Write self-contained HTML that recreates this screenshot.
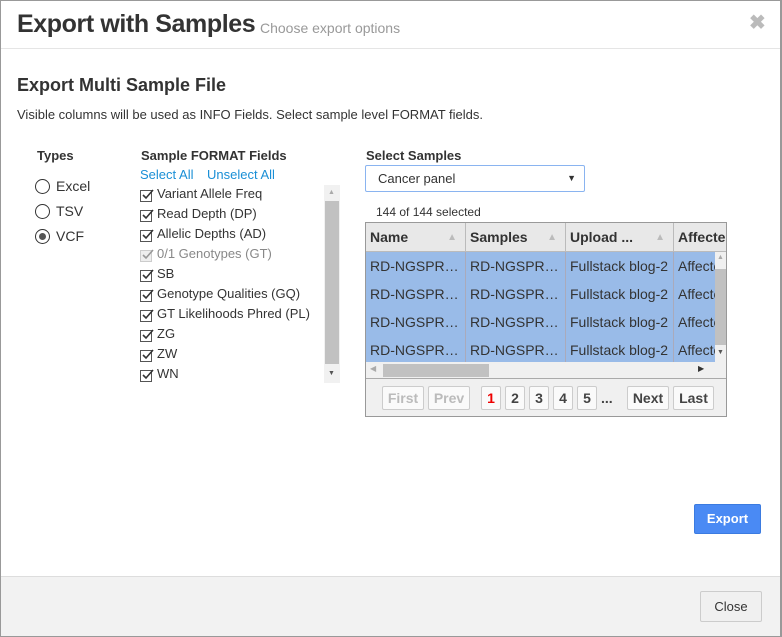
<!DOCTYPE html><html><head><style>
*{box-sizing:border-box}body{margin:0;width:782px;height:637px;overflow:hidden;font-family:"Liberation Sans",sans-serif;background:#fff;position:relative;color:#333}
.a{position:absolute;white-space:nowrap}
.cb{position:absolute;width:12px;height:12px;border:1px solid #555;background:#fff}
.cb svg{position:absolute;left:1px;top:-2px}
.lab{position:absolute;font-size:13px;color:#333}
.th{position:absolute;top:0;height:29px;line-height:29px;font-weight:bold;font-size:14px;color:#333;padding-left:4px;border-right:1px solid #bbb}
.td{position:absolute;height:28px;line-height:28px;font-size:14px;color:#333;padding-left:4px;border-right:1px solid #aab}
.pb{position:absolute;top:386px;height:24px;line-height:22px;border:1px solid #ccc;border-radius:2px;font-size:14px;font-weight:bold;text-align:center;background:#fafafa;color:#444}
</style></head><body>
<div class="a" style="left:0;top:0;width:782px;height:637px;border:1px solid #999;border-right:2px solid #999"></div>
<div class="a" style="left:17px;top:10px;font-size:25px;font-weight:bold;color:#333;letter-spacing:-0.4px">Export with Samples</div>
<div class="a" style="left:260px;top:20px;font-size:14px;color:#999">Choose export options</div>
<div class="a" style="left:749px;top:10px;font-size:20px;font-weight:bold;color:#bbb">✖</div>
<div class="a" style="left:1px;top:48px;width:779px;height:1px;background:#e5e5e5"></div>
<div class="a" style="left:17px;top:75px;font-size:18px;font-weight:bold;color:#333">Export Multi Sample File</div>
<div class="a" style="left:17px;top:107px;font-size:13px;color:#333">Visible columns will be used as INFO Fields. Select sample level FORMAT fields.</div>
<div class="a" style="left:37px;top:148px;font-size:13px;font-weight:bold">Types</div>
<div class="a" style="left:35px;top:179px;width:15px;height:15px;border:1px solid #333;border-radius:50%"></div>
<div class="a" style="left:56px;top:178px;font-size:14px">Excel</div>
<div class="a" style="left:35px;top:204px;width:15px;height:15px;border:1px solid #333;border-radius:50%"></div>
<div class="a" style="left:56px;top:203px;font-size:14px">TSV</div>
<div class="a" style="left:35px;top:229px;width:15px;height:15px;border:1px solid #333;border-radius:50%"><div style="position:absolute;left:3px;top:3px;width:7px;height:7px;border-radius:50%;background:#555"></div></div>
<div class="a" style="left:56px;top:228px;font-size:14px">VCF</div>
<div class="a" style="left:141px;top:148px;font-size:13px;font-weight:bold">Sample FORMAT Fields</div>
<div class="a" style="left:140px;top:167px;font-size:13px;color:#1a8fd6">Select All</div>
<div class="a" style="left:207px;top:167px;font-size:13px;color:#1a8fd6">Unselect All</div>
<div class="a" style="left:324px;top:185px;width:16px;height:198px;background:#f1f1f1"><div style="position:absolute;left:1px;top:16px;width:14px;height:163px;background:#c1c1c1"></div><div style="position:absolute;left:4px;top:4px;font-size:7px;color:#aaa">▲</div><div style="position:absolute;left:4px;top:185px;font-size:7px;color:#555">▼</div></div>
<div id="cbs"></div>
<script>
var L=["Variant Allele Freq","Read Depth (DP)","Allelic Depths (AD)","0/1 Genotypes (GT)","SB","Genotype Qualities (GQ)","GT Likelihoods Phred (PL)","ZG","ZW","WN"];var h="";
L.forEach(function(t,i){var y=190+i*20;var d=i==3;
h+='<div class="cb" style="left:140px;top:'+y+'px;'+(d?'border-color:#ccc;background:#eee':'')+'"><svg width="12" height="12"><path d="M1 6 L4 9 L11 1" fill="none" stroke="'+(d?'#999':'#333')+'" stroke-width="1.6"/></svg></div><div class="lab" style="left:157px;top:'+(y-4)+'px;'+(d?'color:#888':'')+'">'+t+'</div>'});
document.getElementById("cbs").innerHTML=h;
</script>
<div class="a" style="left:366px;top:148px;font-size:13px;font-weight:bold">Select Samples</div>
<div class="a" style="left:365px;top:165px;width:220px;height:27px;border:1px solid #8ab4f0;border-radius:2px;font-size:13px;line-height:25px;padding-left:12px;color:#333">Cancer panel<span style="position:absolute;right:8px;font-size:9px">▼</span></div>
<div class="a" style="left:376px;top:205px;font-size:12px;color:#333">144 of 144 selected</div>
<div class="a" style="left:365px;top:222px;width:362px;height:195px;border:1px solid #999;background:#f0f0f0;overflow:hidden">
<div class="a" style="left:0;top:0;width:362px;height:29px;background:#e8e8e8;border-bottom:1px solid #bbb"></div>
<div class="th" style="left:0;width:100px">Name<span style="position:absolute;right:8px;color:#bbb;font-size:10px">▲</span></div>
<div class="th" style="left:100px;width:100px">Samples<span style="position:absolute;right:8px;color:#bbb;font-size:10px">▲</span></div>
<div class="th" style="left:200px;width:108px">Upload ...<span style="position:absolute;right:8px;color:#bbb;font-size:10px">▲</span></div>
<div class="th" style="left:308px;width:60px;border:0">Affecte</div>
<div class="a" style="left:0;top:29px;width:349px;height:110px;background:#99bbe8"></div>
<div id="rows"></div>
<div class="a" style="left:349px;top:29px;width:13px;height:110px;background:#f0f0f0"><div style="position:absolute;left:0;top:17px;width:12px;height:76px;background:#c1c1c1"></div><div style="position:absolute;left:2px;top:2px;font-size:7px;color:#aaa">▲</div><div style="position:absolute;left:2px;top:97px;font-size:7px;color:#555">▼</div></div>
<div class="a" style="left:0;top:139px;width:349px;height:16px;background:#f0f0f0"><div style="position:absolute;left:17px;top:2px;width:106px;height:13px;background:#c1c1c1"></div><div style="position:absolute;left:4px;top:2px;font-size:8px;color:#aaa">◀</div><div style="position:absolute;left:332px;top:2px;font-size:8px;color:#333">▶</div></div>
<div class="a" style="left:0;top:155px;width:362px;height:1px;background:#aaa"></div>
</div>
<script>
var r="";for(var i=0;i<4;i++){var y=29+i*28;r+='<div class="td" style="left:0;top:'+y+'px;width:100px">RD-NGSPR…</div><div class="td" style="left:100px;top:'+y+'px;width:100px">RD-NGSPR…</div><div class="td" style="left:200px;top:'+y+'px;width:108px">Fullstack blog-2</div><div class="td" style="left:308px;top:'+y+'px;width:41px;border:0;overflow:hidden">Affected</div>'}
document.getElementById("rows").innerHTML=r;
</script>
<div class="pb" style="left:382px;width:42px;color:#bbb">First</div>
<div class="pb" style="left:428px;width:42px;color:#bbb">Prev</div>
<div class="pb" style="left:481px;width:20px;color:#e00">1</div>
<div class="pb" style="left:505px;width:20px">2</div>
<div class="pb" style="left:529px;width:20px">3</div>
<div class="pb" style="left:553px;width:20px">4</div>
<div class="pb" style="left:577px;width:20px">5</div>
<div class="a" style="left:601px;top:390px;font-size:14px;font-weight:bold;color:#444">...</div>
<div class="pb" style="left:627px;width:42px">Next</div>
<div class="pb" style="left:673px;width:41px">Last</div>
<div class="a" style="left:694px;top:504px;width:67px;height:30px;background:#4a8af4;border:1px solid #3b7be0;border-radius:2px;color:#fff;font-size:13px;font-weight:bold;text-align:center;line-height:28px">Export</div>
<div class="a" style="left:1px;top:576px;width:779px;height:60px;background:#f2f2f2;border-top:1px solid #ddd"></div>
<div class="a" style="left:700px;top:591px;width:62px;height:31px;background:#f0f0f0;border:1px solid #ccc;border-radius:2px;font-size:13px;text-align:center;line-height:29px;color:#333">Close</div>
</body></html>
